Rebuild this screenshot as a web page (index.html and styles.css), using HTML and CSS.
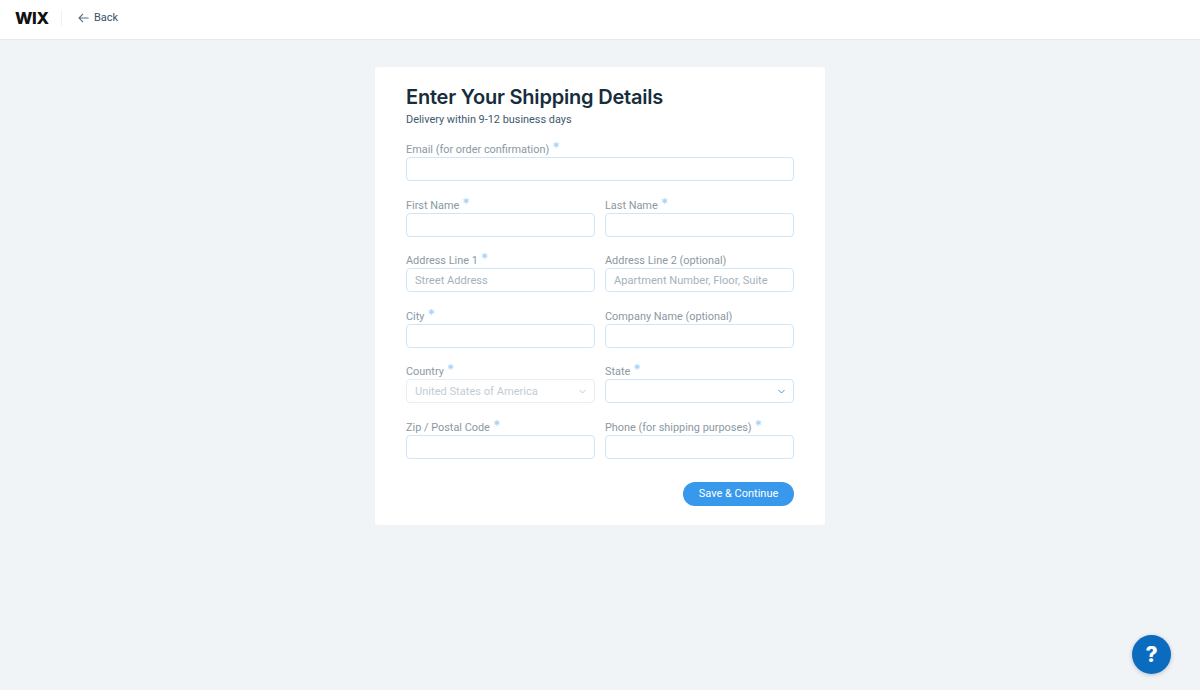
FILE: index.html
```html
<!DOCTYPE html>
<html lang="en">
    <head>
        <meta charset="UTF-8">
        <meta name="viewport" content="width=device-width, initial-scale=1.0">
        <title>Shipping Details</title>
        <link rel="stylesheet" href="styles.css">
    </head>
    <body>
        <header class="topbar">
            <span class="logo">WIX</span>
            <span class="divider"></span>
            <a class="back" href="#">
                <svg class="back-icon" width="11" height="10" viewBox="0 0 11 10"><path d="M5 .8 1 5l4 4.2M1 5h9.6" fill="none" stroke="#577083" stroke-width="1.1"/></svg>
                Back
            </a>
        </header>
        <main class="page">
            <form class="card">
                <h1 class="title">Enter Your Shipping Details</h1>
                <p class="subtitle">Delivery within 9-12 business days</p>
                <div class="fields">
                    <div class="field wide">
                        <label class="label">Email (for order confirmation)<span class="req">*</span></label>
                        <div class="input"></div>
                    </div>
                    <div class="field">
                        <label class="label">First Name<span class="req">*</span></label>
                        <div class="input"></div>
                    </div>
                    <div class="field">
                        <label class="label">Last Name<span class="req">*</span></label>
                        <div class="input"></div>
                    </div>
                    <div class="field">
                        <label class="label">Address Line 1<span class="req">*</span></label>
                        <div class="input placeholder">Street Address</div>
                    </div>
                    <div class="field">
                        <label class="label">Address Line 2 (optional)</label>
                        <div class="input placeholder">Apartment Number, Floor, Suite</div>
                    </div>
                    <div class="field">
                        <label class="label">City<span class="req">*</span></label>
                        <div class="input"></div>
                    </div>
                    <div class="field">
                        <label class="label">Company Name (optional)</label>
                        <div class="input"></div>
                    </div>
                    <div class="field">
                        <label class="label">Country<span class="req">*</span></label>
                        <div class="input select disabled">United States of America
                            <svg width="7" height="5" viewBox="0 0 7 5"><path d="M.5 1 3.5 4l3-3" fill="none" stroke="#c3ccd4" stroke-width="1"/></svg>
                        </div>
                    </div>
                    <div class="field">
                        <label class="label">State<span class="req">*</span></label>
                        <div class="input select">
                            <svg width="7" height="5" viewBox="0 0 7 5"><path d="M.5 1 3.5 4l3-3" fill="none" stroke="#3899ec" stroke-width="1"/></svg>
                        </div>
                    </div>
                    <div class="field">
                        <label class="label">Zip / Postal Code<span class="req">*</span></label>
                        <div class="input"></div>
                    </div>
                    <div class="field">
                        <label class="label">Phone (for shipping purposes)<span class="req">*</span></label>
                        <div class="input"></div>
                    </div>
                </div>
                <div class="actions">
                    <button type="button" class="save">Save &amp; Continue</button>
                </div>
            </form>
        </main>
        <button type="button" class="help">?</button>
    </body>
</html>
```

FILE: styles.css
```css
* {
    box-sizing: border-box;
}
html, body {
    height: 100%;
}
body {
    margin: 0;
    background-color: #f0f4f7;
    font-family: Roboto, "Liberation Sans", sans-serif;
    color: #162d3d;
    overflow: hidden;
}
.topbar {
    display: flex;
    align-items: center;
    height: 40px;
    padding: 0 0 4px 15px;
    background-color: #fff;
    border-bottom: 1px solid #e6eaed;
}
.logo {
    width: 33px;
    font-family: Inter, sans-serif;
    font-size: 16.5px;
    font-weight: 800;
    letter-spacing: -0.4px;
    color: #111;
}
.divider {
    width: 1px;
    height: 16px;
    margin-left: 13px;
    background-color: #eef1f3;
}
.back {
    display: flex;
    align-items: center;
    margin-left: 16px;
    gap: 5px;
    font-size: 11px;
    color: #3b5163;
    text-decoration: none;
}
.page {
    display: flex;
    justify-content: center;
    padding-top: 27px;
}
.card {
    width: 450px;
    height: 458px;
    padding: 17px 31px 0;
    background-color: #fff;
    border-radius: 3px;
}
.title {
    margin: 0;
    font-family: Inter, sans-serif;
    font-size: 20px;
    line-height: 26px;
    font-weight: 600;
    letter-spacing: -0.2px;
}
.subtitle {
    margin: 2px 0 0;
    font-size: 10.9px;
    line-height: 16px;
    color: #40596c;
}
.fields {
    display: grid;
    grid-template-columns: 189px 189px;
    column-gap: 10px;
    row-gap: 7.5px;
    margin-top: 5px;
}
.wide {
    grid-column: 1 / 3;
}
.label {
    display: block;
    height: 24px;
    padding-top: 9px;
    font-size: 10.9px;
    line-height: 15px;
    color: #8b98a3;
    white-space: nowrap;
}
.req {
    margin-left: 3px;
    font-family: Inter, sans-serif;
    font-size: 14px;
    line-height: 0;
    font-weight: 600;
    color: #a8d4f7;
}
.input {
    display: flex;
    align-items: center;
    justify-content: space-between;
    height: 24px;
    padding: 1px 8px 0;
    font-size: 11.1px;
    background-color: #fff;
    border: 1px solid #cfe6fa;
    border-radius: 4px;
}
.placeholder {
    color: #a5b2bc;
}
.select {
    justify-content: flex-end;
}
.disabled {
    justify-content: space-between;
    color: #c3ccd4;
    border-color: #e6eef4;
}
.actions {
    display: flex;
    justify-content: flex-end;
    margin-top: 23px;
}
.save {
    width: 111px;
    height: 24px;
    padding: 0;
    font-family: inherit;
    font-size: 11px;
    color: #fff;
    background-color: #3899ec;
    border: none;
    border-radius: 12px;
    cursor: pointer;
}
.help {
    position: absolute;
    right: 29px;
    bottom: 16px;
    width: 39px;
    height: 39px;
    padding: 0;
    font-family: Inter, sans-serif;
    font-size: 21px;
    font-weight: 800;
    color: #fff;
    background-color: #0b6cbf;
    border: none;
    border-radius: 50%;
    box-shadow: 0 1px 4px rgba(22, 45, 61, 0.25);
}
```
